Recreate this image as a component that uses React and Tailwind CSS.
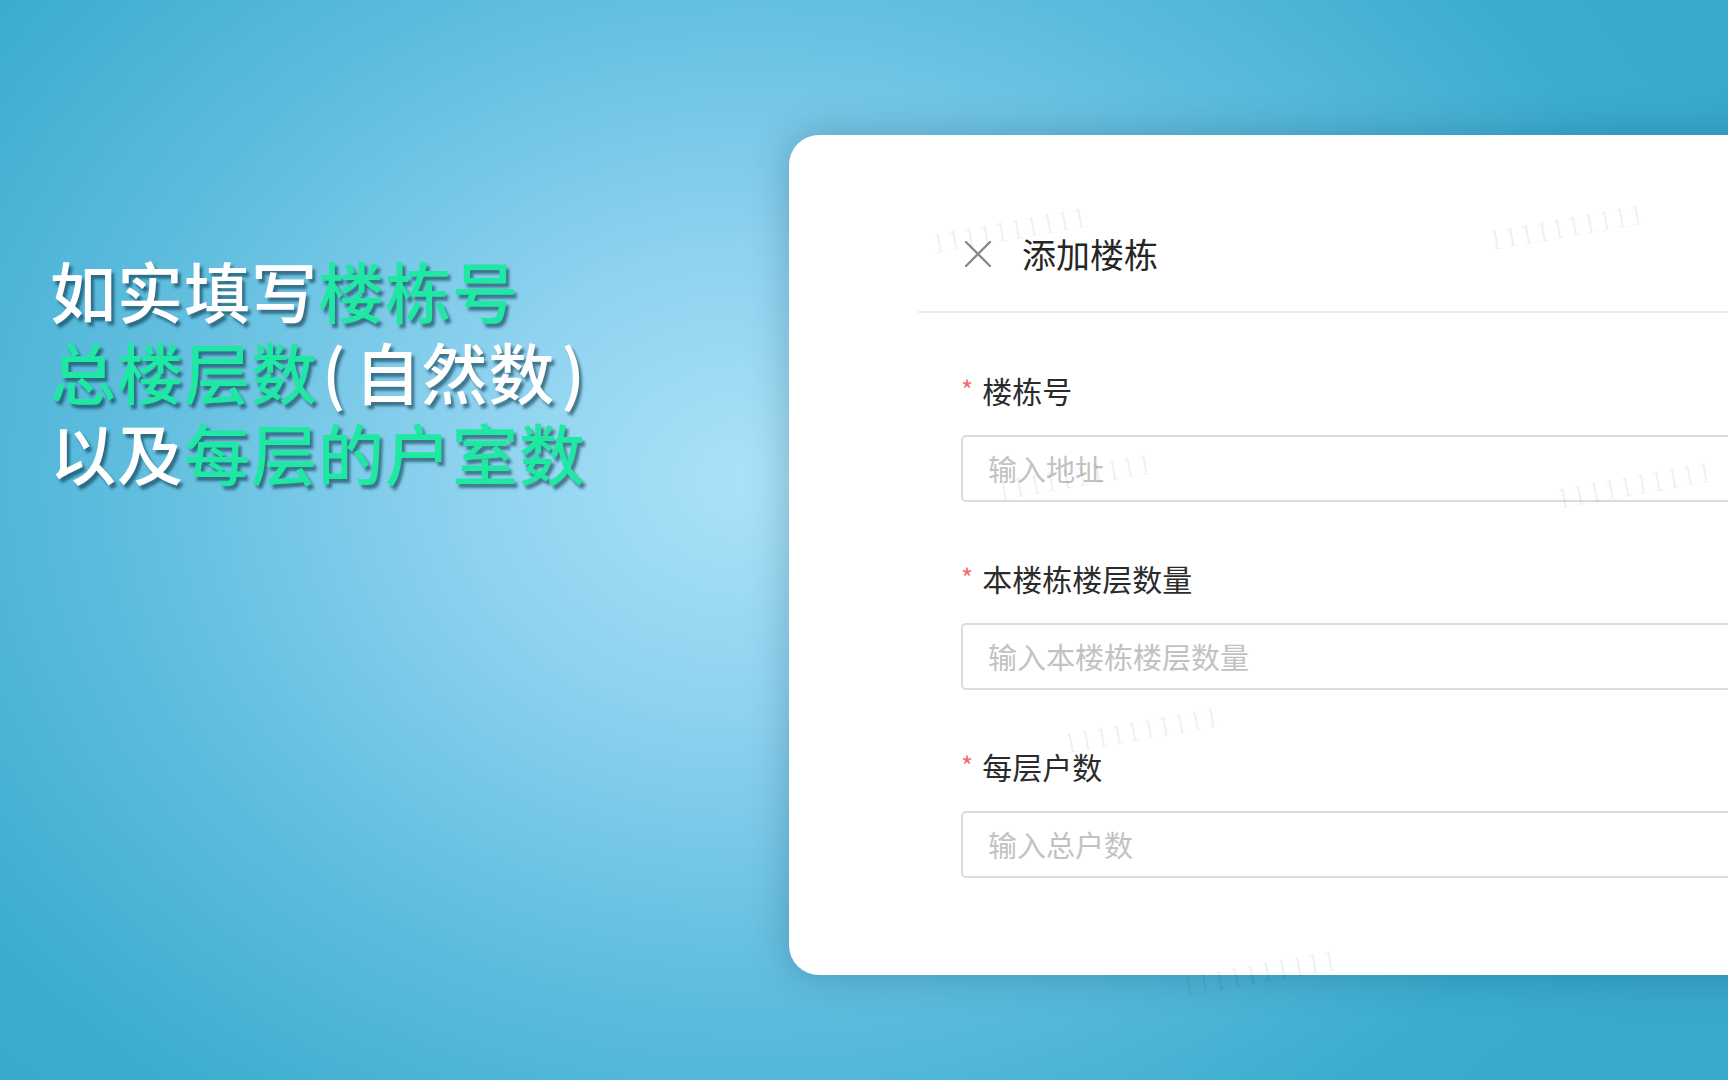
import React from "react";

const cjk = { fontFamily: '"Noto Sans CJK SC", "Noto Sans", sans-serif' };

function Mark({ className }) {
  return (
    <div
      className={"pointer-events-none absolute select-none text-[30px] leading-none tracking-[2px] text-black/[0.06] " + className}
      style={{ fontFamily: '"Liberation Serif", serif' }}
    >
      1111111111
    </div>
  );
}

function Field({ label, placeholder, first }) {
  return (
    <div className={first ? "mt-[57px]" : "mt-[56px]"}>
      <div className="flex h-[40px] items-center">
        <span className="mr-[9px] -mt-[2px] text-[26px] leading-none text-[#f26d6d]">*</span>
        <span className="text-[30px] leading-[40px] text-[#2b2b2b]">{label}</span>
      </div>
      <div className="mt-[25px] flex h-[67px] w-[900px] items-center rounded-[5px] border-2 border-[#dcdcdc] pl-[25px]">
        <span className="text-[29px] leading-none text-[#c2c2c2]">{placeholder}</span>
      </div>
    </div>
  );
}

export default function App() {
  return (
    <div
      className="relative h-[1080px] w-[1728px] overflow-hidden bg-[radial-gradient(ellipse_1100px_900px_at_750px_480px,#ace2f8_0%,#8fd3f0_25%,#62bedf_55%,#3badd0_85%,#38a9cc_100%)]"
      style={cjk}
    >
      <div className="flex h-full">
        <div className="w-[789px] shrink-0 pl-[50px] pt-[249px]">
          <div className="text-[66px] leading-[81px] font-medium tracking-[1px] text-white [text-shadow:3px_4px_3px_rgba(0,40,60,0.55)]">
            <div>
              如实填写<span className="text-[#1fe8a2]">楼栋号</span>
            </div>
            <div>
              <span className="text-[#1fe8a2]">总楼层数</span>
              <span className="ml-[4px] mr-[8px]">(</span>自然数<span className="ml-[6px]">)</span>
            </div>
            <div>
              以及<span className="text-[#1fe8a2]">每层的户室数</span>
            </div>
          </div>
        </div>

        <div className="mt-[135px] h-[840px] w-[1100px] shrink-0 rounded-[30px] bg-white pl-[129px] shadow-[0_0_40px_rgba(0,50,80,0.28)]">
          <div className="flex h-[178px] items-center border-b-2 border-[#ececec] pl-[47px] pt-[62px]">
            <svg width="26" height="26" viewBox="0 0 26 26" className="shrink-0">
              <path d="M1 1 L25 25 M25 1 L1 25" stroke="#8a8a8a" strokeWidth="2.4" strokeLinecap="round" />
            </svg>
            <span className="ml-[31px] text-[34px] leading-none text-[#262626]">添加楼栋</span>
          </div>
          <div className="pl-[43px]">
            <Field first label="楼栋号" placeholder="输入地址" />
            <Field label="本楼栋楼层数量" placeholder="输入本楼栋楼层数量" />
            <Field label="每层户数" placeholder="输入总户数" />
          </div>
        </div>
      </div>

      <Mark className="left-[930px] top-[215px] -rotate-[10deg]" />
      <Mark className="left-[1487px] top-[212px] -rotate-[10deg]" />
      <Mark className="left-[995px] top-[462px] -rotate-[10deg]" />
      <Mark className="left-[1062px] top-[715px] -rotate-[10deg]" />
      <Mark className="left-[1180px] top-[958px] -rotate-[10deg]" />
      <Mark className="left-[1555px] top-[470px] -rotate-[10deg]" />
    </div>
  );
}
